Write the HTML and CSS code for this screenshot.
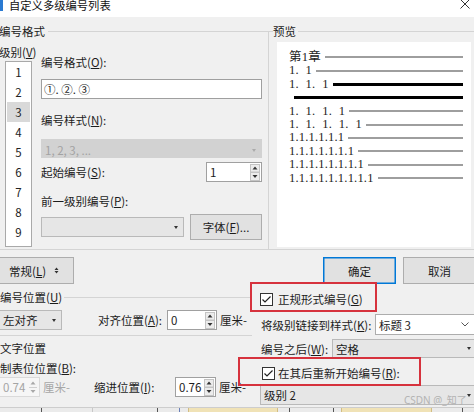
FILE: index.html
```html
<!DOCTYPE html>
<html lang="zh-CN">
<head>
<meta charset="utf-8">
<title>自定义多级编号列表</title>
<link rel="stylesheet" href="styles.css">
</head>
<body>
<div class="titlebar">
  <span class="app-icon"></span>
  <span class="title">自定义多级编号列表</span>
  <svg class="close" width="10" height="10" viewBox="0 0 10 10"><path d="M0.5 -0.5 L9.5 8.5 M9.5 -0.5 L0.5 8.5" stroke="#333" stroke-width="1" fill="none"/></svg>
</div>

<div class="top">
  <fieldset class="grp grp-fmt">
    <legend class="lg lg-fmt">编号格式</legend>
    <div class="fmt-body">
      <div class="levels">
        <div class="lbl lvl-lbl">级别(<u>V</u>)</div>
        <div class="listbox">
          <div class="item">1</div>
          <div class="item">2</div>
          <div class="item sel">3</div>
          <div class="item">4</div>
          <div class="item">5</div>
          <div class="item">6</div>
          <div class="item">7</div>
          <div class="item">8</div>
          <div class="item">9</div>
        </div>
      </div>
      <div class="form">
        <div class="lbl f-lbl1">编号格式(<u>O</u>):</div>
        <div class="textbox fmt-input">①. ②. ③</div>
        <div class="lbl f-lbl2">编号样式(<u>N</u>):</div>
        <div class="combo disabled style-combo"><span>1, 2, 3, ...</span><i class="caret light"></i></div>
        <div class="row start-row">
          <span class="lbl">起始编号(<u>S</u>):</span>
          <div class="spin start-spin"><span class="val">1</span>
            <svg class="spinbtn" width="10" height="17" viewBox="0 0 10 17"><rect x="0.5" y="0.5" width="9" height="7.5" fill="#ececec" stroke="#c4c4c4"/><rect x="0.5" y="8.5" width="9" height="8" fill="#ececec" stroke="#c4c4c4"/><path d="M2.5 5.5 L5 2.5 L7.5 5.5Z M2.5 11 L5 14 L7.5 11Z" fill="#333"/></svg>
          </div>
        </div>
        <div class="lbl f-lbl3">前一级别编号(<u>P</u>):</div>
        <div class="row prev-row">
          <div class="combo prev-combo"><i class="caret"></i></div>
          <div class="btn font-btn">字体(<u>F</u>)...</div>
        </div>
      </div>
    </div>
  </fieldset>
  <fieldset class="grp grp-prev">
    <legend class="lg lg-prev">预览</legend>
    <div class="preview">
      <div class="pv"><span class="pt">第1章</span><span class="bar"></span></div>
      <div class="pv"><span class="pt">1. 1</span><span class="bar"></span></div>
      <div class="pv"><span class="pt">1. 1. 1</span><span class="bar bold"></span></div>
      <div class="pv solo"><span class="bar bold"></span></div>
      <div class="pv"><span class="pt">1. 1. 1. 1</span><span class="bar"></span></div>
      <div class="pv"><span class="pt">1. 1. 1. 1. 1</span><span class="bar"></span></div>
      <div class="pv"><span class="pt">1.1.1.1.1.1</span><span class="bar"></span></div>
      <div class="pv"><span class="pt">1.1.1.1.1.1.1</span><span class="bar"></span></div>
      <div class="pv"><span class="pt">1.1.1.1.1.1.1.1</span><span class="bar"></span></div>
      <div class="pv"><span class="pt">1.1.1.1.1.1.1.1.1</span><span class="bar"></span></div>
    </div>
  </fieldset>
</div>

<div class="btnrow">
  <div class="btn normal-btn">常规(<u>L</u>)<svg class="updown" width="5" height="7" viewBox="0 0 5 7"><path d="M0.5 3 L2.5 0.5 L4.5 3Z M0.5 4 L2.5 6.5 L4.5 4Z" fill="#333"/></svg></div>
  <div class="btn ok-btn">确定</div>
  <div class="btn cancel-btn">取消</div>
</div>

<div class="lower">
  <div class="lcol">
    <div class="sec-head"><span class="lbl">编号位置(<u>U</u>)</span><span class="hline"></span></div>
    <div class="row align-row">
      <div class="combo align-combo"><span>左对齐</span><i class="caret"></i></div>
      <span class="lbl align-lbl">对齐位置(<u>A</u>):</span>
      <div class="spin align-spin"><span class="val">0</span>
        <svg class="spinbtn" width="10" height="17" viewBox="0 0 10 17"><rect x="0.5" y="0.5" width="9" height="7.5" fill="#ececec" stroke="#c4c4c4"/><rect x="0.5" y="8.5" width="9" height="8" fill="#ececec" stroke="#c4c4c4"/><path d="M2.5 5.5 L5 2.5 L7.5 5.5Z M2.5 11 L5 14 L7.5 11Z" fill="#333"/></svg>
      </div>
      <span class="unit">厘米-</span>
    </div>
    <div class="sep"></div>
    <div class="lbl text-head">文字位置</div>
    <div class="lbl tab-lbl">制表位位置(<u>B</u>):</div>
    <div class="row tab-row">
      <div class="spin dis-spin"><span class="val">0.74</span>
        <svg class="spinbtn" width="10" height="17" viewBox="0 0 10 17"><path d="M2.5 5.5 L5 2.5 L7.5 5.5Z M2.5 11 L5 14 L7.5 11Z" fill="#a8a8a8"/><path d="M1 8.5 H9" stroke="#d0d0d0"/></svg>
      </div>
      <span class="unit dis">厘米-</span>
      <span class="lbl indent-lbl">缩进位置(<u>I</u>):</span>
      <div class="spin indent-spin"><span class="val">0.76</span>
        <svg class="spinbtn" width="10" height="17" viewBox="0 0 10 17"><rect x="0.5" y="0.5" width="9" height="7.5" fill="#ececec" stroke="#c4c4c4"/><rect x="0.5" y="8.5" width="9" height="8" fill="#ececec" stroke="#c4c4c4"/><path d="M2.5 5.5 L5 2.5 L7.5 5.5Z M2.5 11 L5 14 L7.5 11Z" fill="#333"/></svg>
      </div>
      <span class="unit">厘米-</span>
    </div>
  </div>
  <div class="rcol">
    <div class="chk-row chk1">
      <svg class="chk" width="13" height="13" viewBox="0 0 13 13"><rect x="0.5" y="0.5" width="12" height="12" fill="#fff" stroke="#333"/><path d="M2.5 6.5 L5 9 L10.5 3.5" fill="none" stroke="#222" stroke-width="1.2"/></svg>
      <span class="lbl">正规形式编号(<u>G</u>)</span>
    </div>
    <div class="row link-row">
      <span class="lbl link-lbl">将级别链接到样式(<u>K</u>):</span>
      <div class="combo white link-combo"><span>标题 3</span><svg class="chev" width="8" height="5" viewBox="0 0 8 5"><path d="M0.5 0.5 L4 4 L7.5 0.5" fill="none" stroke="#555" stroke-width="1"/></svg></div>
    </div>
    <div class="row after-row">
      <span class="lbl after-lbl">编号之后(<u>W</u>):</span>
      <div class="combo after-combo"><span>空格</span><i class="caret"></i></div>
    </div>
    <div class="chk-row chk2">
      <svg class="chk" width="13" height="13" viewBox="0 0 13 13"><rect x="0.5" y="0.5" width="12" height="12" fill="#fff" stroke="#333"/><path d="M2.5 6.5 L5 9 L10.5 3.5" fill="none" stroke="#222" stroke-width="1.2"/></svg>
      <span class="lbl">在其后重新开始编号(<u>R</u>):</span>
    </div>
    <div class="combo level-combo"><span>级别 2</span><i class="caret"></i></div>
  </div>
</div>

<div class="ruler">
  <span class="tick" style="left:41px"></span>
  <span class="tick faint" style="left:92px"></span>
  <span class="tick" style="left:157px"></span>
  <span class="tick blue" style="left:179px"></span>
  <span class="tab" style="left:188px;width:90px"></span>
  <span class="tick" style="left:289px"></span>
  <span class="tick" style="left:333px"></span>
  <span class="tab" style="left:341px;width:91px"></span>
  <span class="tick" style="left:462px"></span>
</div>

<div class="redbox rb1"></div>
<div class="redbox rb2"></div>
<div class="watermark">CSDN @_知了</div>
</body>
</html>
```

FILE: styles.css
```css
* { box-sizing: border-box; margin: 0; padding: 0; }
html, body { width: 474px; height: 412px; overflow: hidden; }
body {
  background: #f0f0f0;
  font-family: "Noto Sans CJK SC", "Microsoft YaHei", sans-serif;
  font-size: 11.5px;
  line-height: 14px;
  color: #1c1c1c;
  position: relative;
}
u { text-decoration: underline; text-underline-offset: 1px; }
.lbl, .lg, .unit, .btn, .combo, .title { white-space: nowrap; }

/* title bar */
.titlebar { height: 17px; background: #fff; display: flex; align-items: flex-start; }
.app-icon { width: 3px; height: 11px; background: #2a7ad2; }
.title { margin-left: 6px; margin-top: -2px; line-height: 14px; font-size: 11.3px; color: #111; }
.close { margin-left: auto; margin-right: 4px; }

/* top area */
.top { display: flex; height: 233px; padding-top: 7px; }
.grp { border: 1px solid #d4d4d4; min-width: 0; padding: 0; margin: 0; }
.grp-fmt { width: 269px; height: 226px; border-left: 0; }
.grp-prev { flex: 1; height: 226px; border-left: 0; border-right: 0; }
.lg { line-height: 14px; }
.lg-fmt { margin-left: -1px; padding: 0 3px 0 0; }
.lg-prev { margin-left: 4px; padding: 0 2px 0 0; }

.fmt-body { display: flex; }
.levels { width: 36px; flex: none; }
.lvl-lbl { margin-top: 7px; margin-left: -1px; }
.listbox {
  margin-top: 2px; margin-left: 5px; width: 27px; height: 186px;
  background: #fff; border: 1px solid #a9a9a9; padding-top: 0;
}
.item { height: 20px; line-height: 20px; text-align: center; color: #222; margin: 0 1px; }
.item.sel { background: #d9d9d9; }

.form { width: 221px; margin-left: 5px; flex: none; }
.f-lbl1 { margin-top: 17px; }
.textbox { background: #fff; border: 1px solid #9f9f9f; height: 20px; display: flex; align-items: center; padding-left: 2px; }
.fmt-input { margin-top: 10px; }
.f-lbl2 { margin-top: 14px; }
.combo { display: flex; align-items: center; border: 1px solid #b9b9b9; background: #e6e6e6; padding-left: 3px; }
.combo .caret {
  margin-left: auto; margin-right: 5px; width: 0; height: 0;
  border-left: 2.5px solid transparent; border-right: 2.5px solid transparent; border-top: 3px solid #333;
}
.combo .caret.light { border-top-color: #aaa; }
.combo.disabled { background: #d2d2d2; border-color: #d2d2d2; color: #a2a2a2; }
.style-combo { margin-top: 12px; height: 19px; padding-top: 3px; }
.row { display: flex; align-items: center; }
.start-row { margin-top: 4px; height: 20px; }
.spin { display: flex; align-items: center; background: #fff; border: 1px solid #a0a0a0; height: 20px; padding: 0 1px 0 3px; }
.spin .spinbtn { margin-left: auto; }
.start-spin { margin-left: auto; width: 56px; }
.f-lbl3 { margin-top: 12px; }
.prev-row { margin-top: 6px; height: 26px; }
.prev-combo { width: 143px; height: 20px; }
.btn {
  display: flex; align-items: center; justify-content: center;
  background: #e1e1e1; border: 1px solid #adadad; color: #1c1c1c;
}
.font-btn { margin-left: auto; width: 72px; height: 26px; }

/* preview */
.preview { margin: 4px 0 0 8px; width: 194px; height: 205px; background: #fff; padding: 8.6px 8px 0 12px; }
.pv { display: flex; align-items: center; height: 13.44px; }
.pt {
  font-family: "Liberation Serif", "Noto Sans CJK SC", serif; font-size: 12.5px; line-height: 13px;
  letter-spacing: 0.2px; word-spacing: 3.5px; color: #222; white-space: pre;
}
.bar { flex: 1; height: 2px; background: #9e9e9e; margin-left: 4px; }
.bar.bold { height: 3px; background: #000; }
.pv.solo .bar { margin-left: 5px; }

/* buttons */
.btnrow { display: flex; margin-top: 7px; height: 27px; }
.normal-btn { margin-left: -1px; width: 75px; justify-content: flex-start; padding-left: 9px; }
.updown { margin-left: 8px; }
.ok-btn { margin-left: auto; width: 73px; border-color: #0078d7; box-shadow: inset 0 0 0 0.5px #0078d7; }
.cancel-btn { margin-left: 7px; width: 73px; margin-right: -2px; }

/* lower */
.lower { display: flex; height: 123px; }
.lcol { width: 255px; flex: none; }
.rcol { flex: 1; min-width: 0; }
.sec-head { display: flex; align-items: center; margin-top: 6px; height: 14px; }
.hline { flex: 1; height: 1px; background: #d4d4d4; margin: 0 3px 0 2px; }
.align-row { margin-top: 6px; height: 20px; }
.align-combo { margin-left: -1px; width: 63px; height: 20px; flex: none; }
.align-lbl { margin-left: 36px; width: 69px; flex: none; }
.align-spin { width: 50px; flex: none; }
.unit { margin-left: 3px; }
.unit.dis { color: #a6a6a6; }
.sep { margin-top: 5px; height: 1px; background: #d4d4d4; margin-right: 3px; }
.text-head { margin-top: 5px; }
.tab-lbl { margin-top: 6px; }
.tab-row { margin-top: 2px; height: 20px; }
.dis-spin { margin-left: -1px; width: 41px; flex: none; background: #f6f6f6; border-color: #dadada; color: #a4a4a4; }
.indent-lbl { margin-left: 24px; width: 81px; flex: none; }
.indent-spin { width: 41px; flex: none; }

.chk-row { display: flex; align-items: center; height: 14px; }
.chk { flex: none; }
.chk1 { margin-top: 8px; padding-left: 5px; }
.chk1 .lbl { margin-left: 5px; }
.link-row { margin-top: 8px; height: 21px; padding-left: 6px; }
.link-lbl { width: 114px; flex: none; }
.link-combo { flex: 1; height: 21px; margin-right: -3px; background: #fff; }
.combo.white { background: #fff; border-color: #adadad; }
.chev { margin-left: auto; margin-right: 7px; }
.after-row { margin-top: 4px; height: 19px; padding-left: 6px; }
.after-lbl { width: 71px; flex: none; }
.after-combo { flex: 1; height: 19px; margin-right: -3px; }
.chk2 { margin-top: 8px; padding-left: 7px; }
.chk2 .lbl { margin-left: 3px; }
.level-combo { margin-top: 5px; margin-left: 5px; height: 20px; margin-right: -3px; }

/* ruler strip */
.ruler { position: relative; height: 5px; border-top: 1px solid #cdcdcd; background: #ebebeb; }
.tick { position: absolute; top: 0; width: 1px; height: 4px; background: #555; }
.tick.faint { background: #c8c8c8; }
.tick.blue { background: #6a7fb8; }
.tab { position: absolute; top: 0; height: 4px; background: #f0e2b6; border-left: 1px solid #d2bd84; border-right: 1px solid #d2bd84; }

/* annotations */
.redbox { position: absolute; border: 2px solid #d6323d; }
.rb1 { left: 250px; top: 282px; width: 127px; height: 30px; }
.rb2 { left: 238px; top: 357px; width: 183px; height: 29px; }
.watermark {
  position: absolute; left: 404px; top: 394px; font-family: "Noto Sans", "Noto Sans CJK SC", sans-serif;
  font-size: 10px; line-height: 13px; color: #b3b3b3;
}
```
